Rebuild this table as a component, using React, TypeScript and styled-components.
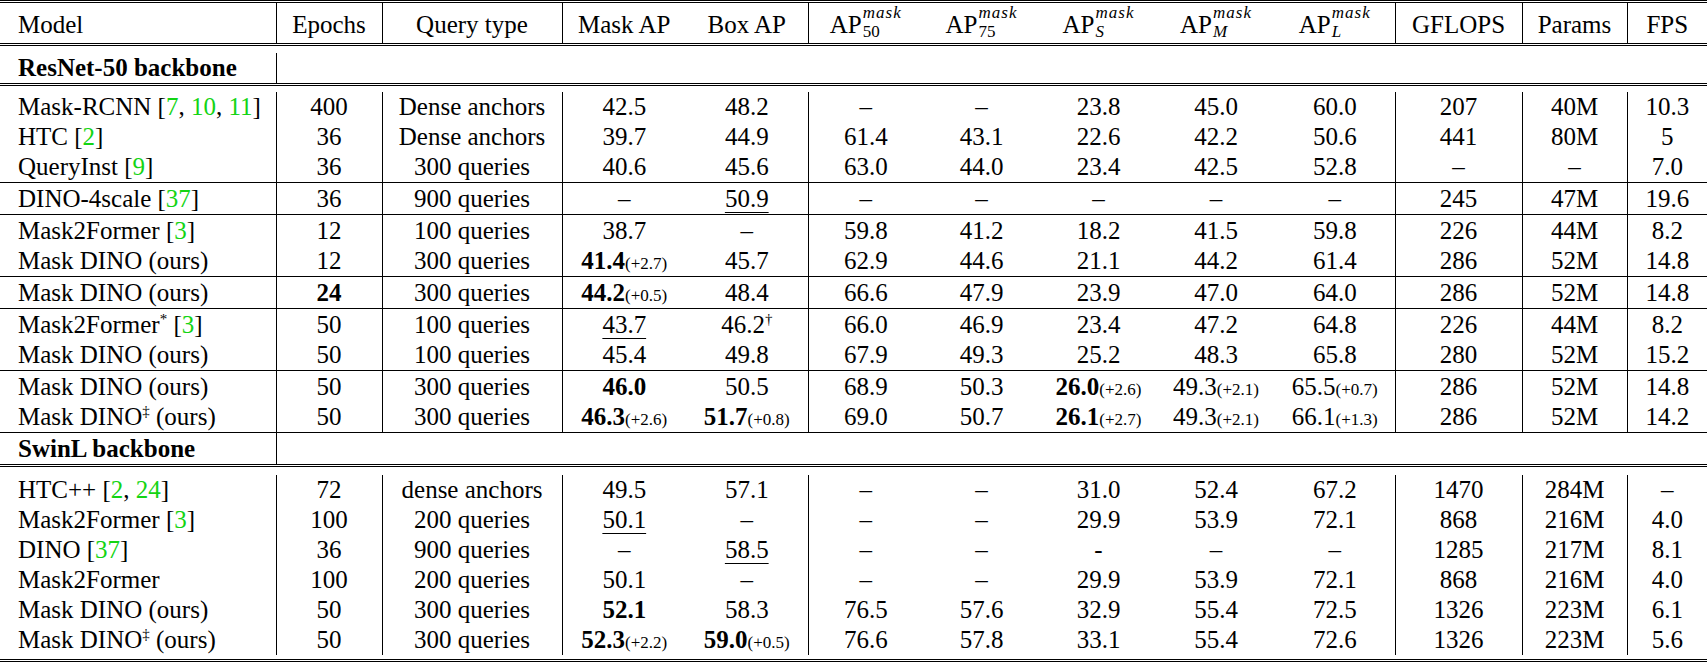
import React from 'react';
import styled, { createGlobalStyle } from 'styled-components';

// column widths measured off the reference, and which columns get a rule on their left
const WIDTHS = [276, 106, 180, 124, 122, 115, 117, 117, 118, 120, 127, 105, 80];
const SEPS = [1, 2, 3, 5, 10, 11, 12];
const X = '\u2013';
const SERIF = `"Liberation Serif", "Times New Roman", Tinos, serif`;

const GlobalStyle = createGlobalStyle`
  html, body {
    margin: 0;
    background: #fff;
    font-family: ${SERIF};
  }
`;

const Table = styled.table`
  width: 1707px;
  border-collapse: collapse;
  table-layout: fixed;
  font-family: ${SERIF};
  font-size: 25px;
  color: #000;
`;

const Col = styled.col<{ $w: number }>`
  width: ${p => p.$w}px;
`;

const Cell = styled.td<{ $sep?: boolean; $first?: boolean; $tall?: boolean }>`
  height: ${p => (p.$tall ? 31 : 30)}px;
  line-height: ${p => (p.$tall ? 31 : 30)}px;
  padding: 0 0 0 ${p => (p.$first ? '18px' : '0')};
  font-family: ${SERIF};
  font-size: 25px;
  text-align: ${p => (p.$first ? 'left' : 'center')};
  white-space: nowrap;
  border-left: ${p => (p.$sep ? '1px solid #000' : 'none')};
`;

const HeadCell = styled(Cell)`
  height: 40px;
  line-height: 30px;
  vertical-align: baseline;
`;

const SectionTitle = styled(Cell)`
  font-weight: bold;
`;

const RuleCell = styled.td<{ $double?: boolean }>`
  padding: 0;
  height: ${p => (p.$double ? 3 : 1)}px;
  font-size: 0;
  line-height: 0;
  background: ${p =>
    p.$double ? 'linear-gradient(#000 0 1px, #fff 1px 2px, #000 2px 3px)' : '#000'};
`;

const GapCell = styled.td<{ $h: number }>`
  padding: 0;
  height: ${p => p.$h}px;
  font-size: 0;
  line-height: 0;
`;

const Green = styled.span`
  color: #14d414;
`;

const Bold = styled.b`
  font-weight: bold;
`;

const Delta = styled.span`
  font-size: 17px;
  line-height: 0;
`;

const Under = styled.span`
  text-decoration: underline;
  text-decoration-thickness: 1px;
  text-underline-offset: 5px;
`;

const Mark = styled.span`
  font-size: 15px;
  line-height: 0;
  vertical-align: 9px;
`;

const Scripts = styled.span`
  display: inline-flex;
  flex-direction: column;
  align-items: flex-start;
  font-size: 17px;
  line-height: 19px;
  vertical-align: 15px;
  margin-left: 1px;
`;

const ScriptTop = styled.i`
  font-style: italic;
  letter-spacing: 1px;
`;

const ScriptBottom = styled.span<{ $italic?: boolean }>`
  font-style: ${p => (p.$italic ? 'italic' : 'normal')};
`;

const Cite = ({ refs }: { refs: number[] }) => (
  <>
    [
    {refs.map((r, i) => (
      <React.Fragment key={r}>
        {i > 0 && ', '}
        <Green>{r}</Green>
      </React.Fragment>
    ))}
    ]
  </>
);

const Ap = ({ sub, italic }: { sub: string; italic?: boolean }) => (
  <>
    AP
    <Scripts>
      <ScriptTop>mask</ScriptTop>
      <ScriptBottom $italic={italic}>{sub}</ScriptBottom>
    </Scripts>
  </>
);

const b = (v: string, d?: string) => (
  <>
    <Bold>{v}</Bold>
    {d && <Delta>{d}</Delta>}
  </>
);
const dl = (v: string, d: string) => (
  <>
    {v}
    <Delta>{d}</Delta>
  </>
);
const u = (v: string) => <Under>{v}</Under>;

type Row = React.ReactNode[];

const ours = 'Mask DINO (ours)';
const oursPlus = (
  <>
    Mask DINO<Mark>{'\u2021'}</Mark> (ours)
  </>
);

const resnet: Row[][] = [
  [
    [<>Mask-RCNN <Cite refs={[7, 10, 11]} /></>, '400', 'Dense anchors', '42.5', '48.2', X, X, '23.8', '45.0', '60.0', '207', '40M', '10.3'],
    [<>HTC <Cite refs={[2]} /></>, '36', 'Dense anchors', '39.7', '44.9', '61.4', '43.1', '22.6', '42.2', '50.6', '441', '80M', '5'],
    [<>QueryInst <Cite refs={[9]} /></>, '36', '300 queries', '40.6', '45.6', '63.0', '44.0', '23.4', '42.5', '52.8', X, X, '7.0'],
  ],
  [
    [<>DINO-4scale <Cite refs={[37]} /></>, '36', '900 queries', X, u('50.9'), X, X, X, X, X, '245', '47M', '19.6'],
  ],
  [
    [<>Mask2Former <Cite refs={[3]} /></>, '12', '100 queries', '38.7', X, '59.8', '41.2', '18.2', '41.5', '59.8', '226', '44M', '8.2'],
    [ours, '12', '300 queries', b('41.4', '(+2.7)'), '45.7', '62.9', '44.6', '21.1', '44.2', '61.4', '286', '52M', '14.8'],
  ],
  [
    [ours, b('24'), '300 queries', b('44.2', '(+0.5)'), '48.4', '66.6', '47.9', '23.9', '47.0', '64.0', '286', '52M', '14.8'],
  ],
  [
    [<>Mask2Former<Mark>*</Mark> <Cite refs={[3]} /></>, '50', '100 queries', u('43.7'), <>46.2<Mark>{'\u2020'}</Mark></>, '66.0', '46.9', '23.4', '47.2', '64.8', '226', '44M', '8.2'],
    [ours, '50', '100 queries', '45.4', '49.8', '67.9', '49.3', '25.2', '48.3', '65.8', '280', '52M', '15.2'],
  ],
  [
    [ours, '50', '300 queries', b('46.0'), '50.5', '68.9', '50.3', b('26.0', '(+2.6)'), dl('49.3', '(+2.1)'), dl('65.5', '(+0.7)'), '286', '52M', '14.8'],
    [oursPlus, '50', '300 queries', b('46.3', '(+2.6)'), b('51.7', '(+0.8)'), '69.0', '50.7', b('26.1', '(+2.7)'), dl('49.3', '(+2.1)'), dl('66.1', '(+1.3)'), '286', '52M', '14.2'],
  ],
];

const swin: Row[] = [
  [<>HTC++ <Cite refs={[2, 24]} /></>, '72', 'dense anchors', '49.5', '57.1', X, X, '31.0', '52.4', '67.2', '1470', '284M', X],
  [<>Mask2Former <Cite refs={[3]} /></>, '100', '200 queries', u('50.1'), X, X, X, '29.9', '53.9', '72.1', '868', '216M', '4.0'],
  [<>DINO <Cite refs={[37]} /></>, '36', '900 queries', X, u('58.5'), X, X, '-', X, X, '1285', '217M', '8.1'],
  ['Mask2Former', '100', '200 queries', '50.1', X, X, X, '29.9', '53.9', '72.1', '868', '216M', '4.0'],
  [ours, '50', '300 queries', b('52.1'), '58.3', '76.5', '57.6', '32.9', '55.4', '72.5', '1326', '223M', '6.1'],
  [oursPlus, '50', '300 queries', b('52.3', '(+2.2)'), b('59.0', '(+0.5)'), '76.6', '57.8', '33.1', '55.4', '72.6', '1326', '223M', '5.6'],
];

const header: React.ReactNode[] = [
  'Model', 'Epochs', 'Query type', 'Mask AP', 'Box AP',
  <Ap sub="50" />, <Ap sub="75" />, <Ap sub="S" italic />, <Ap sub="M" italic />, <Ap sub="L" italic />,
  'GFLOPS', 'Params', 'FPS',
];

const Rule = ({ double }: { double?: boolean }) => (
  <tr>
    <RuleCell colSpan={13} $double={double} />
  </tr>
);

const Gap = ({ h }: { h: number }) => (
  <tr>
    <GapCell colSpan={13} $h={h} />
  </tr>
);

const Section = ({ title, tall }: { title: string; tall?: boolean }) => (
  <tr>
    <SectionTitle $first $tall={tall}>{title}</SectionTitle>
    <Cell colSpan={12} $sep $tall={tall} />
  </tr>
);

const DataRow = ({ row, tall }: { row: Row; tall?: boolean }) => (
  <tr>
    {row.map((c, i) => (
      <Cell key={i} $first={i === 0} $sep={SEPS.includes(i)} $tall={tall}>
        {c}
      </Cell>
    ))}
  </tr>
);

const App: React.FC = () => (
  <>
    <GlobalStyle />
    <Table>
      <colgroup>
        {WIDTHS.map((w, i) => (
          <Col key={i} $w={w} />
        ))}
      </colgroup>
      <tbody>
        <Rule double />
        <tr>
          {header.map((h, i) => (
            <HeadCell key={i} $first={i === 0} $sep={SEPS.includes(i)}>
              {h}
            </HeadCell>
          ))}
        </tr>
        <Rule double />
        <Gap h={7} />
        <Section title="ResNet-50 backbone" />
        <Rule double />
        <Gap h={6} />
        {resnet.map((group, gi) => (
          <React.Fragment key={gi}>
            {gi > 0 && <Rule />}
            {group.map((row, ri) => (
              <DataRow key={ri} row={row} tall={gi > 0 && ri === 0} />
            ))}
          </React.Fragment>
        ))}
        <Rule />
        <Section title="SwinL backbone" tall />
        <Rule double />
        <Gap h={8} />
        {swin.map((row, ri) => (
          <DataRow key={ri} row={row} />
        ))}
        <Gap h={4} />
        <Rule double />
      </tbody>
    </Table>
  </>
);

export default App;
